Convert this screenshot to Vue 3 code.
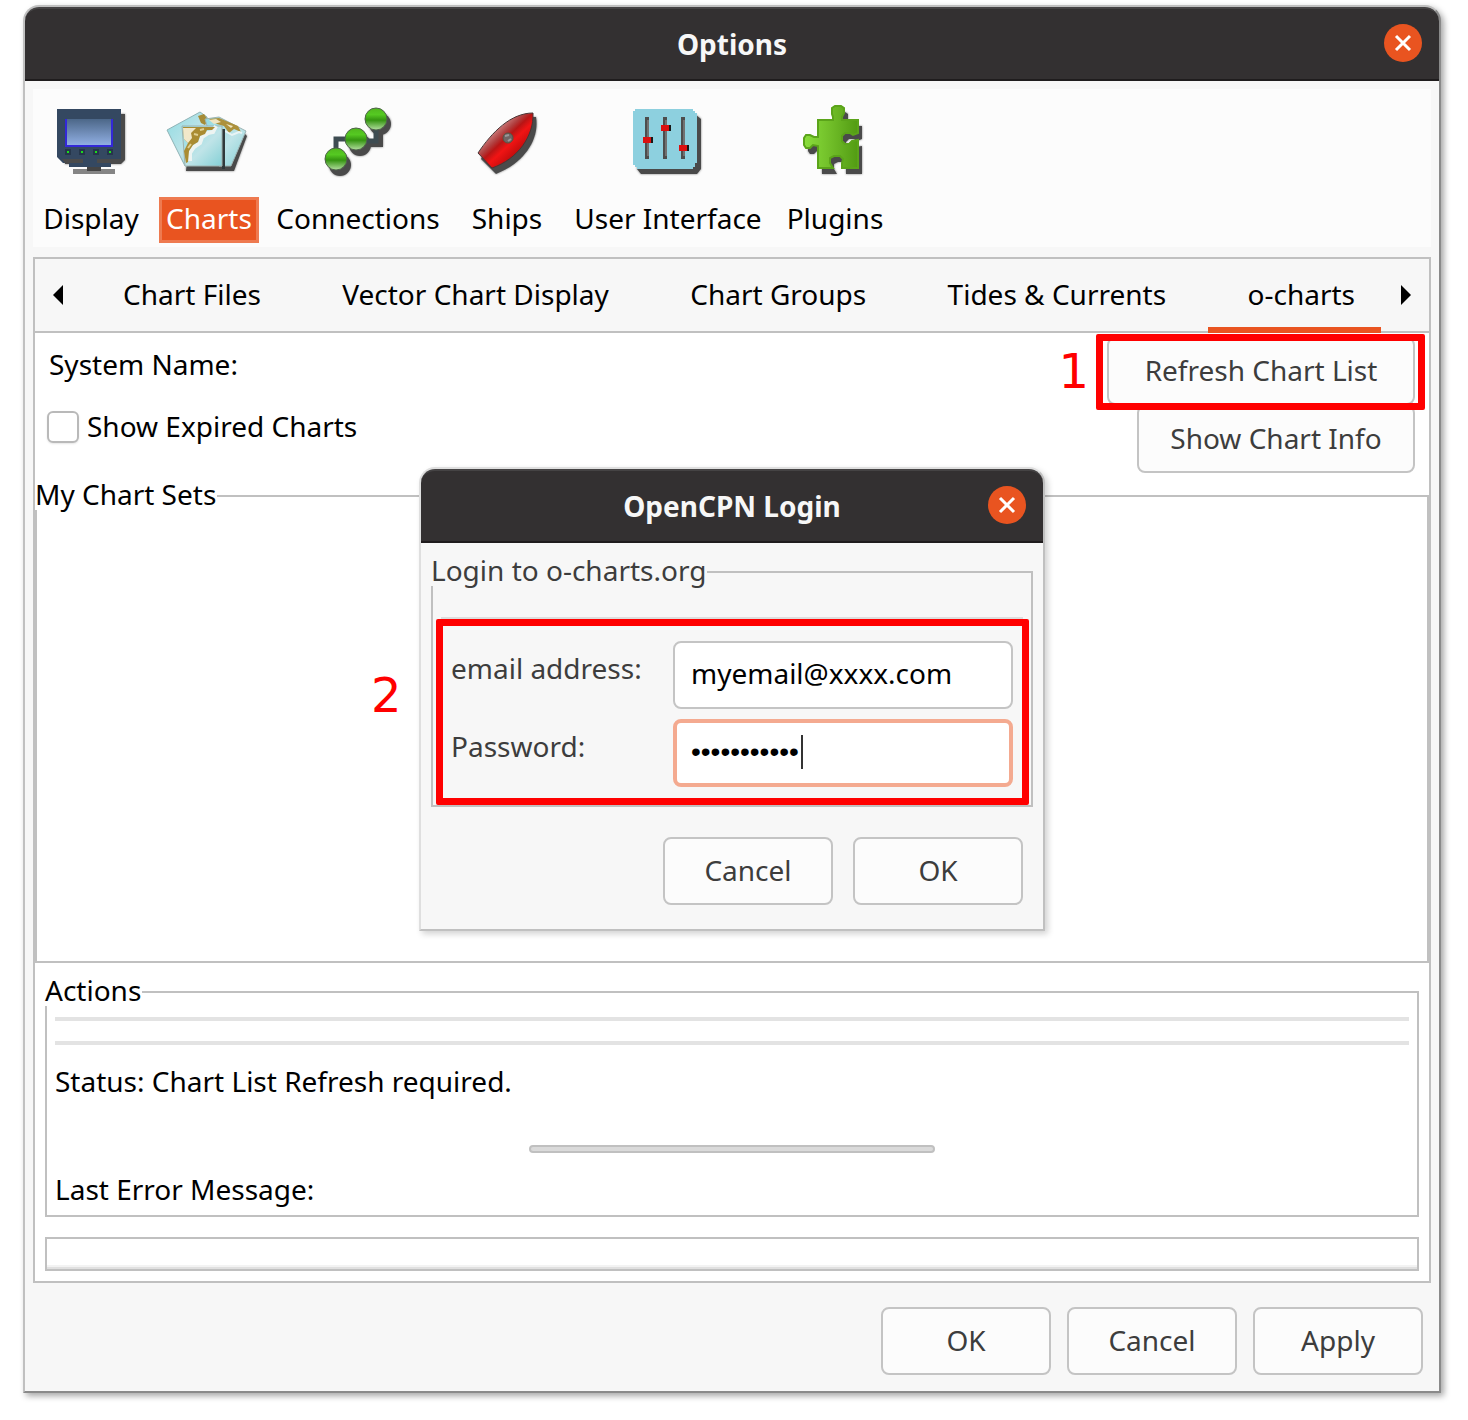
<template>
  <div class="window">
    <header class="titlebar">
      <h1 class="title">Options</h1>
      <button class="close" aria-label="Close">
        <svg viewBox="0 0 38 38"><path d="M12 12 L26 26 M26 12 L12 26" /></svg>
      </button>
    </header>

    <div class="body">
      <nav class="toolbar">
        <button
          v-for="item in sections"
          :key="item.id"
          class="section"
          :class="{ active: item.id === section }"
          @click="section = item.id"
        >
          <svg v-if="item.id === 'display'" class="icon" viewBox="0 0 88 80">
            <defs>
              <linearGradient id="screen" x1="0" y1="0" x2="0" y2="1">
                <stop offset="0" stop-color="#4c6788" />
                <stop offset="1" stop-color="#90aee2" />
              </linearGradient>
            </defs>
            <path class="shadow" d="M14 12 H78 V58 L74 62 H18 Z" />
            <rect x="26" y="67" width="42" height="5" fill="#858585" />
            <rect x="40" y="64" width="14" height="5" fill="#444" />
            <path d="M10 7 H74 V57 L70 61 H64 V65 H22 V61 H16 L10 55 Z" fill="#344861" />
            <path d="M15 57 H36 V61 H18 Z M50 57 H74 V58 L70 61 H50 Z" fill="#4b4b4b" />
            <path d="M18 17 H66 V45 H18 Z" fill="#3328d8" />
            <path d="M20 17 H64 V43 H20 Z" fill="url(#screen)" />
            <template v-for="x in [21, 35, 49, 63]" :key="x">
              <rect :x="x - 3" y="47" width="6" height="6" fill="#26364b" />
              <rect :x="x - 1" y="49" width="2" height="2" fill="#1be01b" />
            </template>
          </svg>

          <svg v-else-if="item.id === 'charts'" class="icon" viewBox="0 0 88 80">
            <defs>
              <linearGradient id="sea" x1="0" y1="0" x2="1" y2="1">
                <stop offset="0" stop-color="#8fdbe2" />
                <stop offset="0.55" stop-color="#bfe4e8" />
                <stop offset="1" stop-color="#84d0d6" />
              </linearGradient>
            </defs>
            <path class="shadow" d="M22 60 L66 60 L79 31 L82 34 L69 69 H21 Z" />
            <path d="M2 28 L35 10 L42 15 L46 60 L20 64 Z" fill="url(#sea)" stroke="#8fb3b6" />
            <path d="M33 14 L39 12 L43 18 L40 23 L36 21 Z" fill="#a58b36" />
            <path d="M40 17 L54 15 L81 29 L66 64 H54 Z" fill="url(#sea)" stroke="#9db4b4" />
            <path d="M44 17 L54 16 L73 24 L76 30 L69 27 L64 31 L59 24 L52 22 Z" fill="#ad913b" />
            <path d="M44 18 L51 17 L56 20 L49 22 Z M61 22 L68 24 L66 26 Z" fill="#efe5c2" />
            <path d="M60 29 L67 33 L74 30 L77 31" fill="none" stroke="#e9f4f5" stroke-width="2" />
            <path d="M57 27 H60 V67 H57 Z" fill="#30393b" />
            <path d="M17 24 H57 V64 H20 Z" fill="url(#sea)" stroke="#9fb3b0" />
            <path d="M51 24 L48 30 L43 31 L37 35 L35 41 L29 45 L25 51 L25 59" fill="none" stroke="#edf4f2" stroke-width="4" />
            <path d="M18 25 H50 L47 28 L42 28 L40 32 L35 34 L33 40 L28 43 L24 49 L23 60 L21 61 L19 49 L23 41 L19 37 Z" fill="#aa8c32" />
            <path d="M18 26 H31 L26 31 L27 36 L23 41 L19 37 Z" fill="#f1e8ca" />
            <path d="M35 28 L39 27 M29 32 L33 33 M23 46 L26 42" stroke="#dfcf92" stroke-width="2" />
          </svg>

          <svg v-else-if="item.id === 'connections'" class="icon" viewBox="0 0 88 80">
            <defs>
              <linearGradient id="node" x1="0" y1="0" x2="0" y2="1">
                <stop offset="0" stop-color="#50b71d" />
                <stop offset="0.3" stop-color="#55c922" />
                <stop offset="0.55" stop-color="#349410" />
                <stop offset="1" stop-color="#b4dfa0" />
              </linearGradient>
            </defs>
            <g class="shadow">
              <circle cx="66" cy="22" r="11" />
              <circle cx="46" cy="43" r="11" />
              <circle cx="26" cy="63" r="11" />
              <path d="M63 32 H69 V45 H53 V40 H63 Z" />
            </g>
            <path d="M22 51 V37 H36 M48 39 H62 V27" fill="none" stroke="#3e4c52" stroke-width="5" />
            <g fill="url(#node)" stroke="#4e634a">
              <circle cx="62" cy="17" r="11" />
              <circle cx="42" cy="37" r="11" />
              <circle cx="22" cy="57" r="11" />
            </g>
          </svg>

          <svg v-else-if="item.id === 'ships'" class="icon" viewBox="0 0 88 80">
            <defs>
              <linearGradient id="hull" x1="0.28" y1="0.25" x2="0.7" y2="0.7">
                <stop offset="0" stop-color="#d79999" />
                <stop offset="0.35" stop-color="#b03e3e" />
                <stop offset="0.5" stop-color="#b81515" />
                <stop offset="0.7" stop-color="#f11414" />
                <stop offset="1" stop-color="#c90d0d" />
              </linearGradient>
            </defs>
            <path class="shadow" d="M73 15 C77 39 59 62 33 72 L18 57 C28 34 51 14 73 15 Z" />
            <path d="M70 11 C71 34 55 57 29 66 L15 51 C29 30 48 11 70 11 Z" fill="url(#hull)" stroke="#4a3434" />
            <circle cx="45" cy="36" r="5" fill="#706565" stroke="#554" />
            <path d="M42 34 L46 33 M45 39 L48 37" stroke="#999" stroke-width="2" />
          </svg>

          <svg v-else-if="item.id === 'interface'" class="icon" viewBox="0 0 88 80">
            <path class="shadow" d="M15 13 H72 L77 17 V67 L73 72 H17 L13 67 Z" />
            <path d="M11 7 H69 V9 H71 V11 H73 V61 H71 V65 H69 V67 H13 V65 H11 V63 H9 V9 H11 Z" fill="#8dd0df" />
            <g v-for="slider in sliders" :key="slider.x">
              <rect :x="slider.x" y="15" width="4" height="42" fill="#4d4d4d" />
              <rect :x="slider.x + 2" y="18" width="2" height="36" fill="#717171" />
              <rect :x="slider.x - 2" :y="slider.y" width="8" height="6" fill="#db1010" />
              <rect :x="slider.x + 6" :y="slider.y" width="2" height="6" fill="#171717" />
            </g>
          </svg>

          <svg v-else class="icon" viewBox="0 0 88 80">
            <defs>
              <linearGradient id="puzzle" x1="0" y1="0" x2="1" y2="0">
                <stop offset="0" stop-color="#8ade3c" />
                <stop offset="0.5" stop-color="#70bd28" />
                <stop offset="1" stop-color="#529b13" />
              </linearGradient>
            </defs>
            <path class="shadow" :d="puzzle" transform="translate(4 6)" />
            <path :d="puzzle" fill="url(#puzzle)" stroke="#5ba41a" stroke-width="2" />
          </svg>
          <span class="section-name">{{ item.name }}</span>
        </button>
      </nav>

      <main class="notebook">
        <div class="tabs">
          <button class="arrow" aria-label="Previous tab">
            <svg viewBox="0 0 10 20"><path d="M10 0 V20 L0 10 Z" /></svg>
          </button>
          <div class="tab-list">
            <button
              v-for="name in tabs"
              :key="name"
              class="tab"
              :class="{ active: name === tab }"
              @click="tab = name"
            >{{ name }}</button>
          </div>
          <button class="arrow" aria-label="Next tab">
            <svg viewBox="0 0 10 20"><path d="M0 0 V20 L10 10 Z" /></svg>
          </button>
        </div>

        <div class="system">
          <div class="system-info">
            <div class="line system-name">System Name:</div>
            <label class="check">
              <input v-model="showExpired" type="checkbox">
              <span>Show Expired Charts</span>
            </label>
          </div>
          <div class="system-actions">
            <div class="step">
              <button class="btn btn-refresh">Refresh Chart List</button>
              <div class="mark mark-refresh"></div>
              <div class="number number-refresh">1</div>
            </div>
            <button class="btn btn-info">Show Chart Info</button>
          </div>
        </div>

        <fieldset class="chart-sets">
          <legend>My Chart Sets</legend>
        </fieldset>

        <fieldset class="actions">
          <legend>Actions</legend>
          <hr>
          <hr>
          <div class="line status">Status: Chart List Refresh required.</div>
          <div class="gauge"></div>
          <div class="line">Last Error Message:</div>
        </fieldset>

        <div class="message"></div>
      </main>

      <footer class="buttons">
        <button class="btn">OK</button>
        <button class="btn">Cancel</button>
        <button class="btn">Apply</button>
      </footer>
    </div>

    <form class="dialog" role="dialog" aria-labelledby="login-title" @submit.prevent>
      <header class="titlebar">
        <h2 id="login-title" class="title">OpenCPN Login</h2>
        <button type="button" class="close" aria-label="Close">
          <svg viewBox="0 0 38 38"><path d="M12 12 L26 26 M26 12 L12 26" /></svg>
        </button>
      </header>
      <fieldset class="login">
        <legend>Login to o-charts.org</legend>
        <hr>
        <div class="fields">
          <label for="email">email address:</label>
          <input id="email" v-model="email" class="field" type="text">
          <label for="password">Password:</label>
          <div class="password">
            <input id="password" v-model="password" class="field focused" type="password">
            <span class="caret"></span>
          </div>
          <div class="mark mark-login"></div>
          <div class="number number-login">2</div>
        </div>
      </fieldset>
      <div class="dialog-buttons">
        <button type="button" class="btn">Cancel</button>
        <button class="btn">OK</button>
      </div>
    </form>
  </div>
</template>

<script setup>
  import { ref } from 'vue';

  const sections = [
    { id: 'display', name: 'Display' },
    { id: 'charts', name: 'Charts' },
    { id: 'connections', name: 'Connections' },
    { id: 'ships', name: 'Ships' },
    { id: 'interface', name: 'User Interface' },
    { id: 'plugins', name: 'Plugins' },
  ];

  const tabs = [
    'Chart Files',
    'Vector Chart Display',
    'Chart Groups',
    'Tides & Currents',
    'o-charts',
  ];

  const sliders = [
    { x: 21, y: 35 },
    { x: 39, y: 23 },
    { x: 57, y: 43 },
  ];

  const puzzle = 'M27 18 H42 V15 L41 12 V6 L44 4 H50 L53 6 V11 L51 15 V18 H67 V31 L62 33 L59 31 H54 L51 34 V39 L54 42 H58 L61 39 L67 38 V66 H51 V61 L52 57 L49 54 H43 L39 56 V61 L42 66 H27 V44 L22 43 L19 46 H15 L13 43 V36 L15 33 L19 33 L23 35 H27 Z';

  const section = ref('charts');
  const tab = ref('o-charts');
  const showExpired = ref(false);
  const email = ref('myemail@xxxx.com');
  const password = ref('opencpn2020');
</script>

<style>
  body {
    background: #FFFFFF;
  }
</style>

<style scoped>
  .window,
  .window button,
  .window input {
    font-family: "Noto Sans", "Open Sans", sans-serif;
    font-size: 28px;
  }
  .window {
    position: relative;
    margin: 5px 27px 27px 23px;
    line-height: 36px;
    color: #000000;
    background: #F7F7F7;
    border: 2px solid #C0C0C0;
    border-right-color: #8A8A8A;
    border-bottom-color: #8A8A8A;
    border-radius: 16px 16px 0 0;
    box-shadow: 3px 3px 6px rgba(0, 0, 0, 0.35);
  }
  .window * {
    box-sizing: border-box;
  }
  button {
    padding: 0;
    color: inherit;
    background: none;
    border: 0;
    white-space: nowrap;
  }

  .titlebar {
    display: grid;
    grid-template-columns: 55px 1fr 55px;
    align-items: center;
    height: 74px;
    color: #F7F7F7;
    background: #333031;
    border-top: 2px solid #454344;
    border-bottom: 2px solid #1F1C1D;
    border-radius: 14px 14px 0 0;
  }
  .title {
    grid-column: 2;
    margin: 0;
    font-size: 28px;
    font-weight: 700;
    text-align: center;
  }
  .close {
    width: 38px;
    height: 38px;
    margin-bottom: 2px;
    background: #E95420;
    border-radius: 50%;
  }
  .close svg {
    display: block;
    fill: none;
    stroke: #FFFFFF;
    stroke-width: 3;
  }

  .body {
    padding: 8px;
  }
  .toolbar {
    display: grid;
    grid-template-columns: 116px 120px 178px 120px 202px 132px;
    padding: 13px 0 4px;
    background: #FCFCFC;
  }
  .section {
    display: flex;
    flex-direction: column;
    align-items: center;
    gap: 15px;
  }
  .icon {
    width: 88px;
    height: 80px;
  }
  .shadow {
    fill: #4A4A4A;
    filter: drop-shadow(0 0 1px #777777);
  }
  .section-name {
    padding: 0 4px 4px;
    line-height: 36px;
    border: 3px solid transparent;
  }
  .section.active .section-name {
    color: #FFFFFF;
    background: #E95420;
    border-color: #EE7A50;
  }

  .notebook {
    margin-top: 10px;
    padding-bottom: 10px;
    background: #FFFFFF;
    border: 2px solid #C0C0C0;
  }
  .tabs {
    display: flex;
    gap: 20px;
    height: 74px;
    padding: 0 18px;
    background: #F7F7F7;
    border-bottom: 2px solid #C0C0C0;
  }
  .tab-list {
    display: flex;
    flex: 1;
    justify-content: space-between;
  }
  .tab {
    height: 74px;
    padding: 0 40px 4px;
    border-top: 6px solid transparent;
    border-bottom: 6px solid transparent;
  }
  .tab.active {
    padding-right: 26px;
    border-bottom-color: #E95420;
  }
  .arrow svg {
    display: block;
    width: 10px;
    height: 20px;
  }

  .system {
    display: flex;
    justify-content: space-between;
    padding: 4px 14px 0 12px;
  }
  .system-info {
    display: flex;
    flex-direction: column;
    gap: 26px;
    padding-top: 9px;
  }
  .system-name {
    padding-left: 2px;
  }
  .check {
    display: flex;
    align-items: center;
    gap: 8px;
  }
  .check span {
    padding-bottom: 2px;
  }
  .check input {
    appearance: none;
    width: 32px;
    height: 32px;
    margin: 0;
    background: #FFFFFF;
    border: 2px solid #B9B9B9;
    border-radius: 6px;
    box-shadow: 0 1px 2px rgba(0, 0, 0, 0.1);
  }
  .check input:checked {
    background: #E95420;
  }
  .system-actions {
    display: flex;
    flex-direction: column;
    align-items: flex-end;
  }
  .step {
    position: relative;
  }
  .btn {
    min-width: 170px;
    height: 68px;
    padding: 0 0 2px;
    color: #3D3D3D;
    background: #FCFCFC;
    border: 2px solid #C4C4C4;
    border-radius: 8px;
  }
  .btn-refresh {
    min-width: 308px;
  }
  .btn-info {
    min-width: 278px;
  }

  /* Numbered steps drawn over the controls */
  .mark {
    position: absolute;
    border: 7px solid #FF0000;
    border-radius: 2px;
    pointer-events: none;
  }
  .mark-refresh {
    inset: -3px -10px -5px -11px;
  }
  .mark-login {
    inset: -22px -6px -18px -5px;
  }
  .number {
    position: absolute;
    line-height: 48px;
    font-family: "DejaVu Sans", sans-serif;
    font-size: 48px;
    color: #FF0000;
  }
  .number-refresh {
    top: 10px;
    right: calc(100% + 18px);
  }
  .number-login {
    top: 30px;
    left: -70px;
  }

  fieldset {
    min-width: 0;
    margin: 0;
    padding: 0;
    border: 2px solid #C0C0C0;
  }
  legend {
    margin-left: -2px;
    padding: 0 1px 4px 0;
    line-height: 24px;
    background: #FFFFFF;
  }
  hr {
    height: 4px;
    margin: 0;
    background: #E3E3E3;
    border: 0;
  }
  .chart-sets {
    min-height: 481px;
    margin-top: 9px;
  }
  .actions {
    margin: 15px 10px 0;
    padding: 11px 8px 8px;
  }
  .actions legend,
  .login legend {
    margin-left: -10px;
  }
  hr + hr {
    margin-top: 20px;
  }
  .status {
    margin-top: 18px;
  }
  .gauge {
    width: 30%;
    height: 8px;
    margin: 46px auto 18px;
    background: #DADADA;
    border: 2px solid #C0C0C0;
    border-radius: 4px;
  }
  .message {
    height: 34px;
    margin: 20px 10px 0;
    border: 2px solid #C0C0C0;
    box-shadow: inset 0 -2px #E0E0E0, inset 0 -4px #F3F3F3;
  }
  .buttons {
    display: flex;
    justify-content: flex-end;
    gap: 16px;
    padding: 24px 8px 8px;
  }

  .dialog {
    position: absolute;
    top: 460px;
    right: 0;
    left: 0;
    width: 626px;
    margin: 0 auto;
    color: #3D3D3D;
    background: #F7F7F7;
    border: 2px solid #DFDFDF;
    border-right-color: #C0C0C0;
    border-bottom-color: #C0C0C0;
    border-radius: 16px 16px 0 0;
    box-shadow: 3px 3px 6px rgba(0, 0, 0, 0.18);
  }
  .login {
    margin: 15px 10px 0;
    padding: 31px 8px 18px;
  }
  .login legend {
    background: #F7F7F7;
  }
  .login hr {
    height: 2px;
    background: #DDDDDD;
  }
  .fields {
    position: relative;
    display: grid;
    grid-template-columns: 222px 1fr;
    row-gap: 10px;
    margin-top: 22px;
    padding: 0 10px;
  }
  .fields label {
    margin-top: 9px;
  }
  .field {
    width: 100%;
    height: 68px;
    padding: 0 16px 4px;
    color: #000000;
    background: #FFFFFF;
    border: 2px solid #C4C4C4;
    border-radius: 8px;
    outline: none;
  }
  .window .field.focused {
    padding: 0 14px 2px;
    font-family: "Liberation Sans", sans-serif;
    border: 4px solid #F4AA90;
  }
  .password {
    position: relative;
  }
  .caret {
    position: absolute;
    top: 16px;
    left: 128px;
    width: 2px;
    height: 34px;
    background: #333333;
  }
  .dialog-buttons {
    display: flex;
    justify-content: flex-end;
    gap: 20px;
    padding: 30px 20px 24px;
  }
</style>
